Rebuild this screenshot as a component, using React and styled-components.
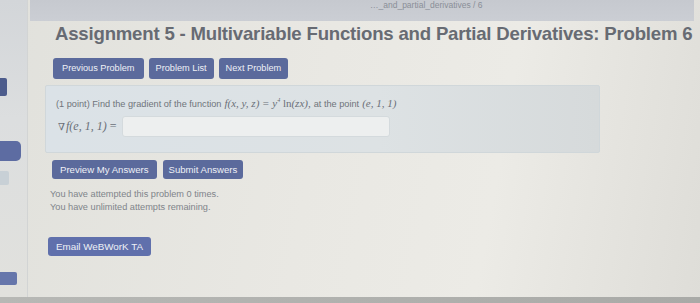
import styled, { createGlobalStyle } from "styled-components";

const GlobalStyle = createGlobalStyle`
  html, body {
    margin: 0;
    padding: 0;
    width: 700px;
    height: 303px;
    overflow: hidden;
  }
  body {
    font-family: "Liberation Sans", Arial, sans-serif;
    background: #e4e3de;
  }
`;

const Screen = styled.div`
  width: 700px;
  height: 303px;
  display: flex;
  flex-direction: column;
  background: linear-gradient(100deg, #e1e1dc 0%, #e9e8e3 45%, #ecebe6 70%, #deddd8 100%);
`;

const Body = styled.div`
  flex: 1;
  display: flex;
  min-height: 0;
`;

const Sidebar = styled.aside`
  width: 27px;
  flex-shrink: 0;
  display: flex;
  flex-direction: column;
  align-items: flex-start;
  background: linear-gradient(180deg, #d3d6d9 0%, #dcdedf 40%, #e1e1dd 100%);
  border-right: 1px solid #d2d4d4;
`;

const SideItem = styled.div`
  width: ${(p) => p.$w}px;
  height: ${(p) => p.$h}px;
  margin-top: ${(p) => p.$top}px;
  background: ${(p) => p.$color};
  border-radius: ${(p) => (p.$round ? "0 5px 5px 0" : "0 2px 2px 0")};
`;

const Main = styled.main`
  flex: 1;
  display: flex;
  flex-direction: column;
  min-width: 0;
  padding-right: 6px;
`;

const Breadcrumb = styled.div`
  height: 21px;
  margin-left: 2px;
  background: linear-gradient(180deg, #c6c9cf 0%, #cbced4 100%);
  display: flex;
  align-items: flex-start;
  padding-left: 340px;
  font-size: 8.5px;
  color: #8a8f98;
  line-height: 10px;
  overflow: hidden;
`;

const Title = styled.h1`
  margin: 1px 0 0 27px;
  font-size: 18.6px;
  font-weight: bold;
  color: #676b73;
  white-space: nowrap;
  letter-spacing: -0.2px;
  line-height: 24px;
`;

const ButtonRow = styled.div`
  display: flex;
  gap: ${(p) => p.$gap || 5}px;
  margin: ${(p) => p.$margin};
`;

const Button = styled.button`
  height: ${(p) => p.$h || 21}px;
  padding: 0 ${(p) => p.$pad || 7}px;
  border: none;
  border-radius: 3px;
  background: ${(p) => p.$bg || "#5b6a9c"};
  color: #eef0f6;
  font-family: "Liberation Sans", Arial, sans-serif;
  font-size: ${(p) => p.$size || 9.2}px;
  line-height: 1;
  white-space: nowrap;
`;

const ProblemBox = styled.section`
  margin: 6px 0 0 17px;
  width: 555px;
  height: 68px;
  box-sizing: border-box;
  background: linear-gradient(90deg, #dbe2e7 0%, #dde2e4 60%, #d6dadb 100%);
  border: 1px solid #d0d7da;
  border-radius: 2px;
  padding: 11px 0 0 10px;
  display: flex;
  flex-direction: column;
  gap: 7px;
`;

const ProblemText = styled.p`
  margin: 0;
  font-size: 9.2px;
  color: #6f747a;
  white-space: nowrap;
  display: flex;
  align-items: baseline;
  gap: 3px;
`;

const Math = styled.span`
  font-family: "Liberation Serif", "Times New Roman", serif;
  font-style: ${(p) => (p.$upright ? "normal" : "italic")};
  font-size: ${(p) => p.$size || 11}px;
  color: #6a6f78;
`;

const Nabla = styled.span`
  font-family: "DejaVu Serif", serif;
  font-style: normal;
  font-size: 10px;
  margin-right: 1px;
`;

const AnswerRow = styled.div`
  display: flex;
  align-items: center;
  gap: 6px;
  padding-left: 2px;
`;

const AnswerInput = styled.div`
  width: 266px;
  height: 19px;
  background: #edefef;
  border: 1px solid #d4dadd;
  border-radius: 3px;
`;

const Note = styled.p`
  margin: 0;
  font-size: 9.2px;
  line-height: 13px;
  color: #80848a;
`;

const Notes = styled.div`
  margin: 9px 0 0 22px;
`;

const BottomBar = styled.div`
  height: 6px;
  background: linear-gradient(90deg, #b7b8b5 0%, #a9aaa7 100%);
`;

export default function App() {
  return (
    <>
      <GlobalStyle />
      <Screen>
        <Body>
          <Sidebar>
            <SideItem $top={78} $w={7} $h={18} $color="#4d5c8c" />
            <SideItem $top={45} $w={21} $h={20} $color="#5d6ca2" $round />
            <SideItem $top={10} $w={9} $h={14} $color="#c8d0d6" />
            <SideItem $top={87} $w={17} $h={13} $color="#6676ab" />
          </Sidebar>
          <Main>
            <Breadcrumb>…_and_partial_derivatives / 6</Breadcrumb>
            <Title>
              Assignment 5 - Multivariable Functions and Partial Derivatives: Problem 6
            </Title>
            <ButtonRow $margin="12px 0 0 25px">
              <Button $pad={9}>Previous Problem</Button>
              <Button $pad={7}>Problem List</Button>
              <Button $pad={7}>Next Problem</Button>
            </ButtonRow>
            <ProblemBox>
              <ProblemText>
                (1 point) Find the gradient of the function
                <Math>
                  f(x, y, z) = y<sup style={{ fontSize: 6 }}>4</sup>{" "}
                  <Math $upright>ln</Math>(zx),
                </Math>
                at the point
                <Math>(e, 1, 1)</Math>
              </ProblemText>
              <AnswerRow>
                <Math $size={12}>
                  <Nabla>∇</Nabla>f(e, 1, 1) <Math $upright $size={12}>=</Math>
                </Math>
                <AnswerInput />
              </AnswerRow>
            </ProblemBox>
            <ButtonRow $gap={6} $margin="7px 0 0 24px">
              <Button $h={19} $size={9.6} $pad={8}>Preview My Answers</Button>
              <Button $h={19} $size={9.6} $pad={6}>Submit Answers</Button>
            </ButtonRow>
            <Notes>
              <Note>You have attempted this problem 0 times.</Note>
              <Note>You have unlimited attempts remaining.</Note>
            </Notes>
            <ButtonRow $margin="23px 0 0 20px">
              <Button $h={19} $bg="#6070ac" $pad={8} $size={9.8}>Email WeBWorK TA</Button>
            </ButtonRow>
          </Main>
        </Body>
        <BottomBar />
      </Screen>
    </>
  );
}
